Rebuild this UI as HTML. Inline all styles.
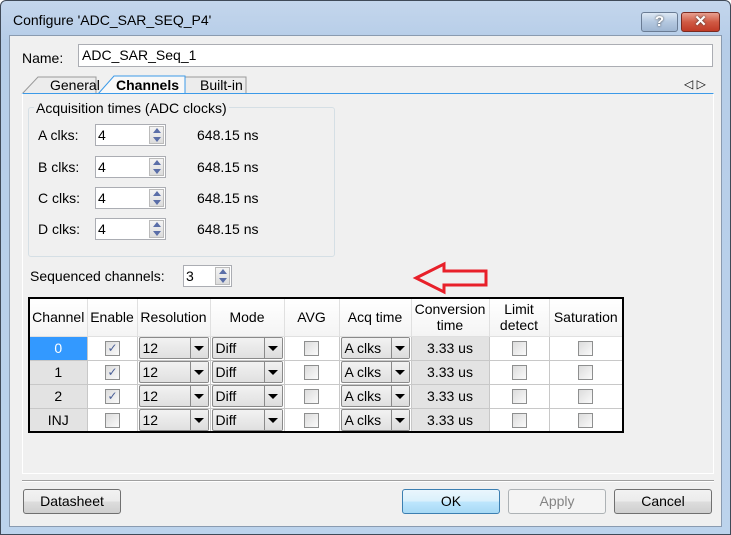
<!DOCTYPE html>
<html><head><style>
*{box-sizing:border-box;margin:0;padding:0}
body{width:731px;height:535px;overflow:hidden;font-family:"Liberation Sans",sans-serif;font-size:13px;color:#000;background:#fff;position:relative}
.a{position:absolute}
.frame{left:0;top:0;width:731px;height:535px;background:linear-gradient(#c4d6ec,#b6cde8 40px,#bcd3ec);border:1px solid #404a58;border-radius:6px 6px 0 0}
.client{left:9px;top:35px;width:713px;height:492px;background:#f0f0f0;border:1px solid #8a9bb0}
.inp{background:#fff;border:1px solid #abadb3}
.btn{border:1px solid #707070;border-radius:3px;background:linear-gradient(#f2f2f2,#ebebeb 50%,#dddddd 51%,#cfcfcf);text-align:center;line-height:23px;font-size:14px}
.spin{background:#fff;border:1px solid #abadb3;height:22px;font-size:14px}
.spin span{position:absolute;left:2px;top:2px}
.sb{position:absolute;right:1px;top:1px;width:15px;height:18px;background:linear-gradient(#f4f4f4,#dcdcdc);border:1px solid #bbb}
.sb:before{content:"";position:absolute;left:3px;top:1px;border:4px solid transparent;border-bottom:5px solid #5a6ea8;border-top:0}
.sb:after{content:"";position:absolute;left:3px;bottom:1px;border:4px solid transparent;border-top:5px solid #5a6ea8;border-bottom:0}
table{border-collapse:collapse;position:absolute;left:28px;top:297px;border:2px solid #000;background:#fff}
td{border:1px solid #c8c8c8;height:24px;text-align:center;font-size:14px;padding:0}
th{font-weight:normal;border:1px solid #e0e0e0;height:38px;background:linear-gradient(#fff,#f4f4f4);font-size:14px;line-height:16px;padding:0}
.cb{display:inline-block;width:15px;height:15px;border:1px solid #8e8f8f;background:linear-gradient(135deg,#dcdcdc,#fafafa);vertical-align:middle;position:relative}
.ck:after{content:"\2713";position:absolute;left:2px;top:-1px;font-size:12px;color:#4a5f97}
.dd{display:block;margin:0 1px;height:22px;border:1px solid #8a8a8a;border-radius:2px;background:linear-gradient(#f2f2f2,#e0e0e0);position:relative;text-align:left;padding-left:3px;line-height:21px;font-size:14px}
.dd:after{content:"";position:absolute;right:0;top:0;width:17px;height:20px;border-left:1px solid #8a8a8a;background:linear-gradient(#f2f2f2,#dcdcdc)}
.dd:before{content:"";position:absolute;right:4px;top:8px;border:5px solid transparent;border-top:5px solid #000;border-bottom:0;z-index:2}
.gr{background:#e3e3e3}
</style></head><body>
<div class="a frame"></div>
<div class="a" style="left:13px;top:12px;font-size:14px;color:#000">Configure 'ADC_SAR_SEQ_P4'</div>
<div class="a" style="left:641px;top:12px;width:37px;height:20px;border:1px solid #6a7c94;border-radius:3px;background:linear-gradient(#dde8f4,#b4c8e0 50%,#9fb6d2);color:#fff;font-weight:bold;text-align:center;font-size:15px;line-height:18px;text-shadow:0 0 2px #333">?</div>
<div class="a" style="left:681px;top:12px;width:39px;height:20px;border:1px solid #7a2a20;border-radius:3px;background:linear-gradient(#e8a090,#d05a44 50%,#c03a26);color:#fff;font-weight:bold;text-align:center;font-size:15px;line-height:18px;text-shadow:0 0 2px #333">✕</div>
<div class="a client"></div>
<div class="a" style="left:22px;top:50px;font-size:14px">Name:</div>
<div class="a inp" style="left:78px;top:44px;width:635px;height:23px;padding:2px 3px;font-size:14px">ADC_SAR_Seq_1</div>
<svg class="a" style="left:20px;top:74px" width="240" height="22">
<path d="M2 20 L18 3 L76 3 L76 20" fill="#ececec" stroke="#9a9a9a"/>
<path d="M165 20 L165 3 L226 3 L226 20" fill="#ececec" stroke="#9a9a9a"/>
<path d="M78 20 L94 2 L165 2 L165 20" fill="#f8f8f8" stroke="#3c9ae8"/>
</svg>
<div class="a" style="left:50px;top:77px;font-size:14px">General</div>
<div class="a" style="left:116px;top:77px;font-weight:bold;font-size:14px">Channels</div>
<div class="a" style="left:200px;top:77px;font-size:14px">Built-in</div>
<div class="a" style="left:684px;top:77px;font-size:12px">◁ ▷</div>
<div class="a" style="left:22px;top:93px;width:692px;height:381px;border:1px solid #fff;border-top:1px solid #3c9ae8;background:#f0f0f0"></div>
<div class="a" style="left:28px;top:107px;width:307px;height:150px;border:1px solid #d5dfe5;border-radius:3px"></div>
<div class="a" style="left:34px;top:100px;background:#f0f0f0;padding:0 2px;font-size:14px">Acquisition times (ADC clocks)</div>
<div class="a" style="left:38px;top:127px;font-size:14px">A clks:</div>
<div class="a" style="left:38px;top:159px;font-size:14px">B clks:</div>
<div class="a" style="left:38px;top:190px;font-size:14px">C clks:</div>
<div class="a" style="left:38px;top:221px;font-size:14px">D clks:</div>
<div class="a spin" style="left:95px;top:124px;width:71px"><span>4</span><div class="sb"></div></div>
<div class="a spin" style="left:95px;top:156px;width:71px"><span>4</span><div class="sb"></div></div>
<div class="a spin" style="left:95px;top:187px;width:71px"><span>4</span><div class="sb"></div></div>
<div class="a spin" style="left:95px;top:218px;width:71px"><span>4</span><div class="sb"></div></div>
<div class="a" style="left:197px;top:127px;font-size:14px">648.15 ns</div>
<div class="a" style="left:197px;top:159px;font-size:14px">648.15 ns</div>
<div class="a" style="left:197px;top:190px;font-size:14px">648.15 ns</div>
<div class="a" style="left:197px;top:221px;font-size:14px">648.15 ns</div>
<div class="a" style="left:30px;top:268px;font-size:14px">Sequenced channels:</div>
<div class="a spin" style="left:183px;top:265px;width:49px"><span>3</span><div class="sb"></div></div>
<svg class="a" style="left:412px;top:260px" width="80" height="36"><path d="M4 18 L32 4 L32 11 L74 11 L74 25 L32 25 L32 32 Z" fill="none" stroke="#e8202a" stroke-width="3"/></svg>
<table>
<tr><th style="width:58px">Channel</th><th style="width:50px">Enable</th><th style="width:73px">Resolution</th><th style="width:74px">Mode</th><th style="width:55px">AVG</th><th style="width:72px">Acq time</th><th style="width:78px">Conversion<br>time</th><th style="width:60px">Limit<br>detect</th><th style="width:74px">Saturation</th></tr>
<tr><td style="background:#3399ff;color:#fff">0</td><td><span class="cb ck"></span></td><td><span class="dd">12</span></td><td><span class="dd">Diff</span></td><td><span class="cb"></span></td><td><span class="dd">A clks</span></td><td class="gr">3.33 us</td><td><span class="cb"></span></td><td><span class="cb"></span></td></tr>
<tr><td class="gr">1</td><td><span class="cb ck"></span></td><td><span class="dd">12</span></td><td><span class="dd">Diff</span></td><td><span class="cb"></span></td><td><span class="dd">A clks</span></td><td class="gr">3.33 us</td><td><span class="cb"></span></td><td><span class="cb"></span></td></tr>
<tr><td class="gr">2</td><td><span class="cb ck"></span></td><td><span class="dd">12</span></td><td><span class="dd">Diff</span></td><td><span class="cb"></span></td><td><span class="dd">A clks</span></td><td class="gr">3.33 us</td><td><span class="cb"></span></td><td><span class="cb"></span></td></tr>
<tr><td class="gr">INJ</td><td><span class="cb"></span></td><td><span class="dd">12</span></td><td><span class="dd">Diff</span></td><td><span class="cb"></span></td><td><span class="dd">A clks</span></td><td class="gr">3.33 us</td><td><span class="cb"></span></td><td><span class="cb"></span></td></tr>
</table>
<div class="a" style="left:22px;top:480px;width:692px;height:1px;background:#a0a0a0"></div>
<div class="a" style="left:22px;top:481px;width:692px;height:1px;background:#fff"></div>
<div class="a btn" style="left:23px;top:489px;width:98px;height:25px">Datasheet</div>
<div class="a btn" style="left:402px;top:489px;width:98px;height:25px;border-color:#3c7fb1;background:linear-gradient(#eaf6fd,#d9f0fc 50%,#bee6fd 51%,#a7d9f5)">OK</div>
<div class="a btn" style="left:508px;top:489px;width:98px;height:25px;border-color:#adb2b5;background:#f4f4f4;color:#838383">Apply</div>
<div class="a btn" style="left:614px;top:489px;width:98px;height:25px">Cancel</div>
</body></html>
